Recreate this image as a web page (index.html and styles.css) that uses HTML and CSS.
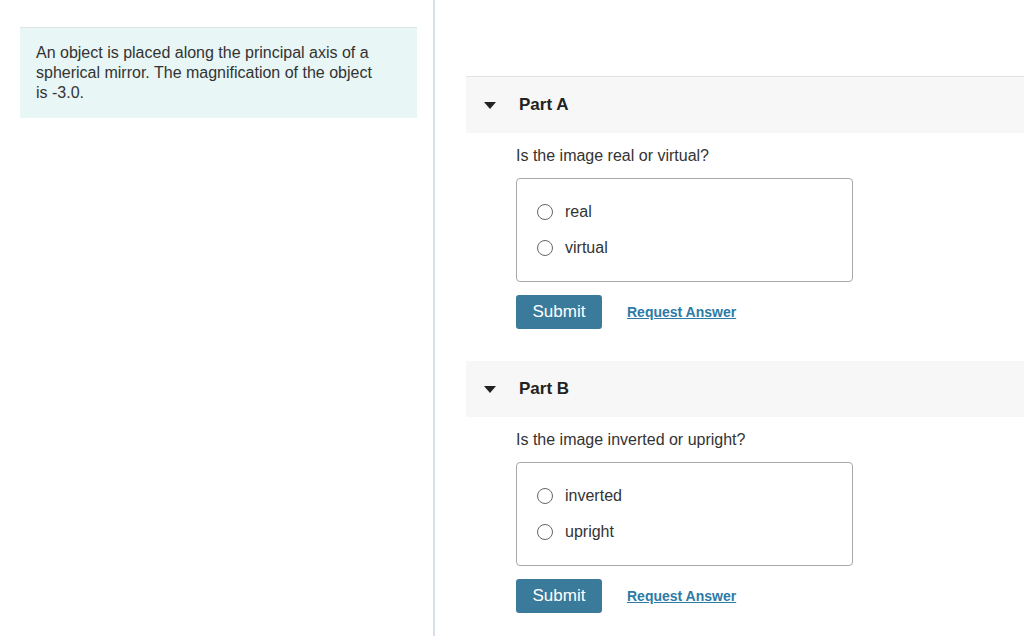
FILE: index.html
```html
<!DOCTYPE html>
<html lang="en">
<head>
    <meta charset="UTF-8">
    <meta name="viewport" content="width=device-width, initial-scale=1.0">
    <title>Spherical Mirror</title>
    <link rel="stylesheet" href="styles.css">
</head>
<body>
    <div class="page">
        <div class="intro-column">
            <div class="intro">
                An object is placed along the principal axis of a spherical mirror. The magnification of the object is -3.0.
            </div>
        </div>

        <div class="parts-column">
            <div class="parts">
                <div class="part">
                    <div class="part-header">
                        <span class="caret"></span>
                        <h3>Part A</h3>
                    </div>
                    <div class="part-body">
                        <p class="question">Is the image real or virtual?</p>
                        <div class="choices">
                            <label class="choice"><input type="radio" name="part-a"> real</label>
                            <label class="choice"><input type="radio" name="part-a"> virtual</label>
                        </div>
                        <div class="actions">
                            <button class="submit">Submit</button>
                            <a href="#" class="request">Request Answer</a>
                        </div>
                    </div>
                </div>

                <div class="part">
                    <div class="part-header">
                        <span class="caret"></span>
                        <h3>Part B</h3>
                    </div>
                    <div class="part-body">
                        <p class="question">Is the image inverted or upright?</p>
                        <div class="choices">
                            <label class="choice"><input type="radio" name="part-b"> inverted</label>
                            <label class="choice"><input type="radio" name="part-b"> upright</label>
                        </div>
                        <div class="actions">
                            <button class="submit">Submit</button>
                            <a href="#" class="request">Request Answer</a>
                        </div>
                    </div>
                </div>
            </div>
        </div>
    </div>
</body>
</html>
```

FILE: styles.css
```css
body {
    margin: 0;
    font-family: "Liberation Sans", Arial, sans-serif;
    color: #333;
    background: #fff;
}
.page {
    display: flex;
    min-height: 636px;
}
.intro-column {
    width: 435px;
    flex-shrink: 0;
    box-sizing: border-box;
    padding: 27px 16px 0 20px;
    border-right: 2px solid #d5e0ea;
}
.intro {
    background-color: #e8f6f6;
    border-top: 1px solid #dde4e4;
    padding: 15px 40px 15px 16px;
    font-size: 16px;
    line-height: 20px;
}
.parts-column {
    flex: 1;
    padding: 76px 0 0 31px;
}
.parts {
    border-top: 1px solid #e2e2e2;
}
.part {
    margin-bottom: 32px;
}
.part:last-child {
    margin-bottom: 0;
}
.part-header {
    display: flex;
    align-items: center;
    height: 56px;
    background-color: #f7f7f7;
}
.caret {
    width: 0;
    height: 0;
    margin-left: 18px;
    border-left: 6px solid transparent;
    border-right: 6px solid transparent;
    border-top: 7px solid #222;
}
.part-header h3 {
    margin: 0 0 0 23px;
    font-size: 17px;
    font-weight: bold;
    color: #222;
}
.part-body {
    padding-left: 50px;
}
.question {
    margin: 13px 0 12px;
    font-size: 16px;
    line-height: 20px;
}
.choices {
    width: 337px;
    box-sizing: border-box;
    border: 1px solid #a8a8a8;
    border-radius: 4px;
    padding: 15px 20px 15px 20px;
}
.choice {
    display: flex;
    align-items: center;
    gap: 12px;
    height: 36px;
    font-size: 16px;
}
.choice input {
    appearance: none;
    width: 16px;
    height: 16px;
    margin: 0;
    border: 1px solid #666;
    border-radius: 50%;
    background: #fff;
}
.actions {
    display: flex;
    align-items: center;
    gap: 25px;
    margin-top: 13px;
}
.submit {
    width: 86px;
    height: 34px;
    padding: 0;
    background-color: #3a7a9b;
    color: #fff;
    border: none;
    border-radius: 3px;
    font-family: inherit;
    font-size: 17px;
    cursor: pointer;
}
.request {
    color: #2d7aa6;
    font-size: 14px;
    font-weight: bold;
    text-decoration: underline;
}
```
